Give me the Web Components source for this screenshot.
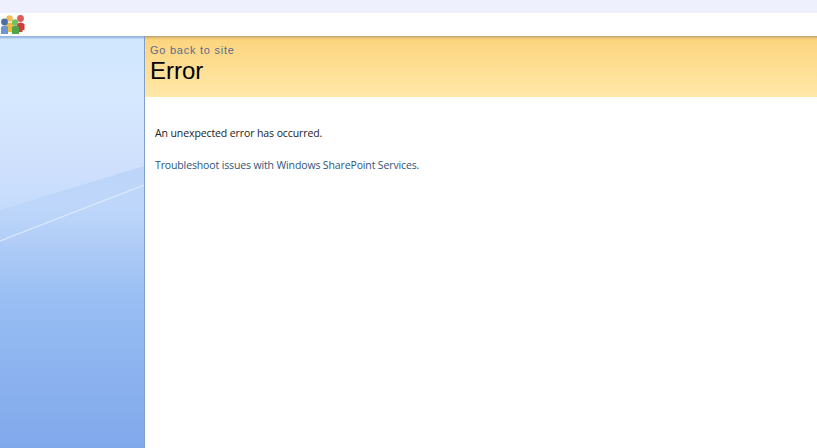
<!DOCTYPE html>
<html>
<head>
<meta charset="utf-8">
<title>Error</title>
<style>
  html, body { margin: 0; height: 100%; overflow: hidden; background: #fff; }
</style>
</head>
<body>
<sp-page>
  <sp-topbar slot="top"></sp-topbar>
  <sp-sidebar slot="side"></sp-sidebar>
  <sp-titlearea slot="title" back="Go back to site" heading="Error"></sp-titlearea>
  <sp-message text="An unexpected error has occurred." link="Troubleshoot issues with Windows SharePoint Services."></sp-message>
</sp-page>
<script>
class SpPage extends HTMLElement {
  constructor() {
    super();
    this.attachShadow({ mode: 'open' });
    this.shadowRoot.innerHTML = `
      <style>
        :host { display: flex; flex-direction: column; width: 817px; height: 448px; overflow: hidden; }
        .body { flex: 1; display: flex; min-height: 0; }
        .main { flex: 1; display: flex; flex-direction: column; min-width: 0; }
      </style>
      <slot name="top"></slot>
      <div class="body">
        <slot name="side"></slot>
        <div class="main">
          <slot name="title"></slot>
          <slot></slot>
        </div>
      </div>
    `;
  }
}

class SpTopbar extends HTMLElement {
  constructor() {
    super();
    this.attachShadow({ mode: 'open' });
    this.shadowRoot.innerHTML = `
      <style>
        :host { display: block; flex: none; }
        .strip { height: 13px; background: #eef1fd; }
        .logo { height: 21px; padding-top: 2px; background: #fff; }
        svg { display: block; filter: blur(.35px); }
      </style>
      <div class="strip"></div>
      <div class="logo">
        <svg width="25" height="20" viewBox="0 0 25 20">
          <circle cx="9.5" cy="3.5" r="3.3" fill="#f0bd55"/>
          <path d="M5.5 9q4-3 8 0v8h-8z" fill="#efb942"/>
          <circle cx="20.5" cy="3.5" r="3.4" fill="#e05a58"/>
          <path d="M16.5 9q4-3 8 0v6h-2v2h-5z" fill="#d03c3c"/>
          <circle cx="15" cy="7.5" r="3.2" fill="#74bf62"/>
          <path d="M12 12q3.5-2.5 7 0v7h-7z" fill="#4fa548"/>
          <circle cx="4.5" cy="7" r="3.4" fill="#4a6ea8"/>
          <path d="M1 12q3.5-2.5 7 0v7H1z" fill="#6a96d2"/>
        </svg>
      </div>
    `;
  }
}

class SpSidebar extends HTMLElement {
  constructor() {
    super();
    this.attachShadow({ mode: 'open' });
    this.shadowRoot.innerHTML = `
      <style>
        :host { display: block; flex: none; width: 144px; border-right: 1px solid #7f9fca; background: linear-gradient(#8fb0dc 0, #a9c4ea 2px, #cfe7fe 3px, #d6e8fe 60px, #cfe0fd 130px, #c6dcfc 170px, #aecbf7 214px, #98bef4 264px, #88afed 364px, #80a9ec 412px); position: relative; overflow: hidden; }
        svg { position: absolute; left: 0; top: 0; }
      </style>
      <svg width="144" height="412" viewBox="0 0 144 412">
        <defs>
          <linearGradient id="band" x1="0" y1="0" x2="0" y2="1">
            <stop offset="0" stop-color="#a3c4f3" stop-opacity=".4"/>
            <stop offset="1" stop-color="#a3c4f3" stop-opacity="0"/>
          </linearGradient>
        </defs>
        <path d="M0 174L144 130V230L0 230z" fill="url(#band)"/>
        <path d="M0 205L144 149" stroke="#dbe9fc" stroke-width="1.2" fill="none"/>
      </svg>
    `;
  }
}

class SpTitlearea extends HTMLElement {
  constructor() {
    super();
    this.attachShadow({ mode: 'open' });
    this.shadowRoot.innerHTML = `
      <style>
        :host { display: block; flex: none; height: 61px; box-sizing: border-box; padding: 8px 0 0 5px; background: linear-gradient(#b89f6e 0, #e8c377 2px, #fdd57f 4px, #ffe8a8 61px); font-family: "Liberation Sans", Arial, sans-serif; }
        a { display: block; font-size: 11px; line-height: 13px; letter-spacing: .75px; color: #5a6c8a; text-decoration: none; }
        h1 { margin: 1px 0 0; font-weight: 400; font-size: 24px; line-height: 26px; color: #000; }
      </style>
      <a></a><h1></h1>
    `;
  }
  connectedCallback() {
    this.shadowRoot.querySelector('a').textContent = this.getAttribute('back');
    this.shadowRoot.querySelector('h1').textContent = this.getAttribute('heading');
  }
}

class SpMessage extends HTMLElement {
  constructor() {
    super();
    this.attachShadow({ mode: 'open' });
    this.shadowRoot.innerHTML = `
      <style>
        :host { display: flex; flex-direction: column; gap: 19px; padding: 30px 0 0 10px; font: 10.5px/13px "Open Sans", "Liberation Sans", sans-serif; letter-spacing: -.1px; color: #222; }
        a { color: #2f5379; text-decoration: none; letter-spacing: -.13px; }
      </style>
      <div id="t"></div><a id="l"></a>
    `;
  }
  connectedCallback() {
    this.shadowRoot.getElementById('t').textContent = this.getAttribute('text');
    this.shadowRoot.getElementById('l').textContent = this.getAttribute('link');
  }
}

customElements.define('sp-page', SpPage);
customElements.define('sp-topbar', SpTopbar);
customElements.define('sp-sidebar', SpSidebar);
customElements.define('sp-titlearea', SpTitlearea);
customElements.define('sp-message', SpMessage);
</script>
</body>
</html>
